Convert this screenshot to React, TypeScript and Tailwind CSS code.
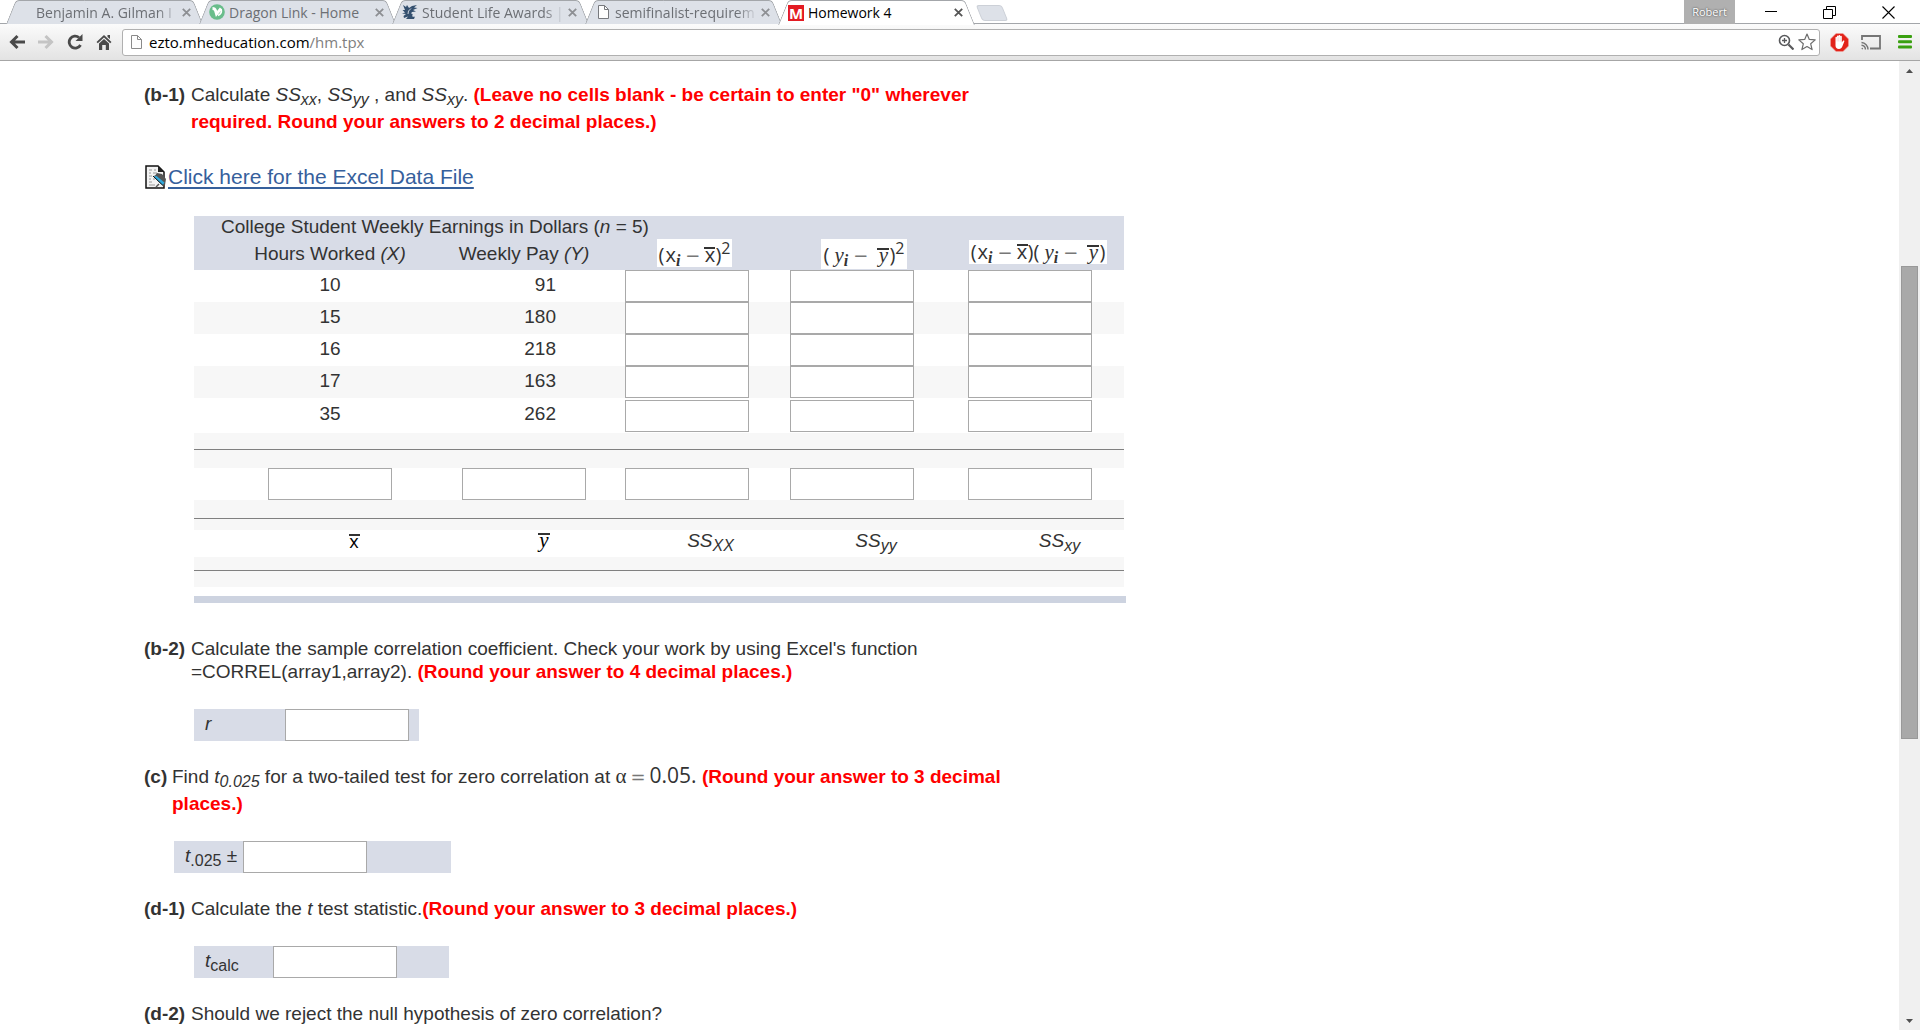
import React from "react";

const box =
  "block h-8 w-[124px] border border-[#a9a9a9] bg-white px-2 text-[19px] outline-none";

function Field({ label, className = "" }: { label: string; className?: string }) {
  return <input type="text" aria-label={label} className={`${box} ${className}`} />;
}

function PageIcon({ stroke = "#8a8a8a" }: { stroke?: string }) {
  return (
    <svg width="16" height="16" viewBox="0 0 16 16" fill="#fdfdfd" stroke={stroke} className="shrink-0">
      <path d="M3.5 1.5h6l4 4v9h-10z" />
      <path d="M9.5 1.5v4h4" fill="none" />
    </svg>
  );
}

function CheckIcon() {
  return (
    <svg width="16" height="16" viewBox="0 0 16 16" className="shrink-0">
      <circle cx="8" cy="8" r="7.8" fill="#69bd8b" />
      <path d="M3.500 4.500c2 0 2.500.5 3 2l1 3.500 4.500-5.500" fill="none" stroke="#fff" strokeWidth="2.800" />
      <path d="M12 5c1 2.500 0 5-3 6.500" fill="none" stroke="#fff" strokeWidth="1.600" />
    </svg>
  );
}

function DragonIcon() {
  return (
    <svg width="16" height="16" viewBox="0 0 16 16" className="shrink-0" fill="#34506f">
      <path d="M1 1l3 2 1-2 2 3 3-2 5-1-3 2.500 3.500.5L11 6l3 1.500-4 .5-1 1.500c2 0 2 1.500 1 2.500 1 1 2.500 1 3 .5L12 15H4l2-2.500L2 14l-.5-2L4 10 0 9.500l3-1L.500 6 3 6z" />
      <path d="M9 4.500L6.500 7l-.5 3" stroke="#dde1e8" strokeWidth=".9" fill="none" />
    </svg>
  );
}

function MLogo() {
  return (
    <span className="flex size-4 shrink-0 items-center justify-center bg-[#e31b23] font-['Open_Sans',sans-serif] text-[15px] leading-4 font-bold text-white">
      M
    </span>
  );
}

type TabProps = { title: string; icon?: React.ReactNode; active?: boolean; fade?: boolean };

function Tab({ title, icon, active = false, fade = false }: TabProps) {
  const side = active
    ? "before:bg-white after:bg-white z-20 h-[25px]"
    : "before:bg-[#dde1e8] after:bg-[#dde1e8] z-10 h-6";
  return (
    <div
      className={`relative -mr-3 flex w-[205px] shrink-0 items-center pr-[14px] pl-[14px] before:absolute before:inset-y-0 before:right-1/2 before:left-1 before:origin-bottom before:-skew-x-[22deg] before:rounded-tl before:border-t before:border-l before:border-[#a3a6aa] after:absolute after:inset-y-0 after:right-1 after:left-[45%] after:origin-bottom after:skew-x-[22deg] after:rounded-tr after:border-t after:border-r after:border-[#a3a6aa] ${side}`}
    >
      <span className="z-10 mr-1 size-4 shrink-0">{icon}</span>
      <button
        type="button"
        className={`z-10 min-w-0 flex-1 overflow-hidden pt-px text-left text-sm leading-6 whitespace-nowrap ${
          active ? "text-black" : "text-[#6c6f74]"
        } ${fade ? "mask-r-from-85%" : ""}`}
      >
        {title}
      </button>
      <button type="button" aria-label={`Close ${title}`} className="z-10 flex h-5 w-[14px] shrink-0 items-center justify-center">
        <svg width="9" height="9" viewBox="0 0 9 9" stroke={active ? "#555" : "#8d8f93"} strokeWidth="1.8">
          <path d="M.8.8l7.4 7.4M8.200.8L.8 8.200" />
        </svg>
      </button>
    </div>
  );
}

function TabStrip() {
  return (
    <header className="flex h-6 justify-between bg-white shadow-[inset_0_-1px_0_#a3a6aa]">
      <nav aria-label="Tabs" className="flex pl-[2px]">
        <Tab title="Benjamin A. Gilman I" fade />
        <Tab title="Dragon Link - Home" icon={<CheckIcon />} />
        <Tab title="Student Life Awards |" icon={<DragonIcon />} fade />
        <Tab title="semifinalist-requirem" icon={<PageIcon stroke="#77797d" />} fade />
        <Tab title="Homework 4" icon={<MLogo />} active />
        <button
          type="button"
          aria-label="New tab"
          className="mt-[5px] ml-3 h-4 w-[26px] skew-x-[22deg] rounded-[3px] border border-[#ccd0d7] bg-[#dde1e8]"
        />
      </nav>
      <div className="flex h-6 items-center">
        <button type="button" className="mr-[30px] h-6 w-[51px] bg-[#b0b0b0] text-[11px] leading-6 text-white [text-shadow:0_0_2px_#333]">
          Robert
        </button>
        <button type="button" aria-label="Minimize" className="mr-[46px]">
          <svg width="12" height="12" viewBox="0 0 12 12" stroke="#000"><path d="M0 5.500h12" /></svg>
        </button>
        <button type="button" aria-label="Restore" className="mr-[46px]">
          <svg width="13" height="13" viewBox="0 0 13 13" stroke="#000" fill="none"><path d="M.5 3.500h9v9h-9zM3.500 3V.5h9v9H10" /></svg>
        </button>
        <button type="button" aria-label="Close" className="mr-[25px]">
          <svg width="13" height="13" viewBox="0 0 13 13" stroke="#000" strokeWidth="1.1"><path d="M.5.5l12 12M12.500.5l-12 12" /></svg>
        </button>
      </div>
    </header>
  );
}

function Toolbar() {
  return (
    <div className="flex h-[37px] shrink-0 items-center border-b border-[#a6a6a6] bg-linear-to-b from-[#fbfbfb] to-[#e3e3e3] pr-2 pl-[9px]">
      <div className="flex gap-[13px] text-[#4a4a4a]">
        <button type="button" aria-label="Back">
          <svg width="16" height="16" viewBox="0 0 16 16" fill="none" stroke="currentColor" strokeWidth="3"><path d="M16 8H3M8.500 2L2.500 8l6 6" /></svg>
        </button>
        <button type="button" aria-label="Forward">
          <svg width="16" height="16" viewBox="0 0 16 16" fill="none" stroke="#c4c4c4" strokeWidth="3"><path d="M0 8h13M7.500 2l6 6-6 6" /></svg>
        </button>
        <button type="button" aria-label="Reload">
          <svg width="16" height="16" viewBox="0 0 16 16" fill="none" stroke="currentColor" strokeWidth="2.800"><path d="M13.500 11A6 6 0 1 1 12 3.500" /><path d="M15.500 0v7h-7z" fill="currentColor" stroke="none" /></svg>
        </button>
        <button type="button" aria-label="Home">
          <svg width="16" height="16" viewBox="0 0 16 16" fill="currentColor"><path d="M8 1l7.500 7-1.300 1.200L8 3.500 1.800 9.200.5 8zM11.500 1H14v4l-2.500-2zM3 9.500l5-4.500 5 4.500V16H9.800v-5H6.200v5H3z" /></svg>
        </button>
      </div>
      <div className="ml-[10px] flex h-[27px] min-w-0 flex-1 items-center rounded-[3px] border border-[#b0b0b0] bg-white pr-[3px] pl-[5px]">
        <PageIcon />
        <div className="ml-[5px] flex min-w-0 flex-1 text-[15px] leading-6 text-black">
          <span>ezto.mheducation.com</span>
          <span className="text-[#808080]">/hm.tpx</span>
        </div>
        <button type="button" aria-label="Zoom" className="mr-1">
          <svg width="16" height="16" viewBox="0 0 16 16" fill="none" stroke="#58595b" strokeWidth="1.600"><circle cx="6.500" cy="6.500" r="5" /><path d="M10.500 10.500l5 5" strokeWidth="2.200" /><path d="M4 6.500h5M6.500 4v5" strokeWidth="1.300" /></svg>
        </button>
        <button type="button" aria-label="Bookmark">
          <svg width="18" height="18" viewBox="0 0 18 18" fill="#fff" stroke="#6d6d6d" strokeWidth="1.200" strokeLinejoin="round"><path d="M9 1l2.300 5.400 5.900.5-4.500 3.900 1.400 5.800L9 13.500l-5.100 3.100 1.400-5.800L.8 6.900l5.900-.5z" /></svg>
        </button>
      </div>
      <div className="ml-[10px] flex items-center">
        <button type="button" aria-label="Ad blocker" className="mr-3">
          <svg width="19" height="19" viewBox="0 0 19 19">
            <path d="M6 .5h7L18.500 6v7L13 18.500H6L.5 13V6z" fill="#e2231a" stroke="#f1a39e" strokeWidth=".6" />
            <path d="M5.500 9V4.500c0-1 1.500-1 1.500 0V3.300c0-1 1.600-1 1.600 0v-.6c0-1 1.600-1 1.600 0v.8c0-1 1.600-1 1.600 0V9.500l1-1.500c.7-.9 1.900-.4 1.500.6l-2 5c-.6 1.600-1.600 2.400-3.300 2.400-2.300 0-3.500-1.500-3.500-3.500z" fill="#fff" />
            <path d="M7.100 4.500v4M8.700 3.500v5M10.300 3.700v5" stroke="#e8b0ad" strokeWidth=".4" />
          </svg>
        </button>
        <button type="button" aria-label="Cast" className="mr-[17px]">
          <svg width="20" height="15" viewBox="0 0 20 15" fill="none" stroke="#757575" strokeWidth="1.800"><path d="M1 5V1h18v12.500H9" /><path d="M.5 7.500a7 7 0 0 1 6.500 7M.5 10.300a4.200 4.200 0 0 1 3.900 4.200" strokeWidth="1.400" /><circle cx="1.300" cy="13.600" r=".8" fill="#757575" stroke="none" /></svg>
        </button>
        <button type="button" aria-label="Menu">
          <svg width="14" height="14" viewBox="0 0 14 14" fill="#3aa010"><rect width="14" height="3" rx="1" /><rect y="5.300" width="14" height="3" rx="1" /><rect y="10.600" width="14" height="3" rx="1" /></svg>
        </button>
      </div>
    </div>
  );
}

function Sub({ children }: { children: React.ReactNode }) {
  return <sub className="text-base leading-none">{children}</sub>;
}

function Red({ children }: { children: React.ReactNode }) {
  return <strong className="font-bold text-[#ff0000]">{children}</strong>;
}

type PartProps = { tag: string; narrow?: boolean; children: React.ReactNode; className?: string };

function Part({ tag, narrow = false, children, className = "" }: PartProps) {
  return (
    <div className={`flex max-w-[890px] ${className}`}>
      <strong className={`shrink-0 font-bold whitespace-nowrap ${narrow ? "w-7" : "w-[47px]"}`}>{tag}</strong>
      <p>{children}</p>
    </div>
  );
}

const serif = "font-['Liberation_Serif',serif]";
const bar = "inline-block h-[15px] border-t-2 border-[#333] text-center leading-[11px]";
const XBar = () => <span className={`w-[11px] ${bar}`}>x</span>;
const YBar = () => <i className={`w-[12px] text-[21px] ${serif} ${bar}`}>y</i>;
const Index = () => <sub className={`text-base font-bold italic ${serif}`}>i</sub>;
const Xi = () => (
  <span className="mx-px">x<Index /></span>
);
const Yi = () => (
  <span className="mr-px ml-[5px]"><i className={`text-[21px] ${serif}`}>y</i><Index /></span>
);
const Operator = ({ children }: { children: string }) => (
  <span className="mx-1 font-['DejaVu_Sans',sans-serif] text-lg leading-none text-[#777]">{children}</span>
);

function Formula({ children, className = "" }: { children: React.ReactNode; className?: string }) {
  return (
    <span className={`inline-block bg-white px-[2px] font-['Open_Sans',sans-serif] text-xl leading-6 whitespace-nowrap ${className}`}>
      {children}
    </span>
  );
}

const rows = [
  [10, 91],
  [15, 180],
  [16, 218],
  [17, 163],
  [35, 262],
];
const columns = ["squared x deviation", "squared y deviation", "product of deviations"];

function Rule({ above, below }: { above: string; below: string }) {
  return (
    <tr className="bg-[#f7f7f7]">
      <td colSpan={7} className={`${above} ${below}`}>
        <hr className="border-[#808080]" />
      </td>
    </tr>
  );
}

function EarningsTable() {
  return (
    <div className="mt-[25px] ml-[50px] w-[932px] border-b-[7px] border-[#cdd3e0] pb-[9px]">
      <table className="w-[930px] table-fixed border-collapse text-center">
        <colgroup>
          <col className="w-[39px]" />
          <col className="w-[194px]" />
          <col className="w-[194px]" />
          <col className="w-[131px]" />
          <col className="w-[200px]" />
          <col className="w-[155px]" />
          <col className="w-[17px]" />
        </colgroup>
        <thead className="bg-[#d8dce7]">
          <tr className="h-[23px] align-top">
            <th colSpan={7} className="pl-[27px] text-left leading-[22px] font-normal">
              College Student Weekly Earnings in Dollars (<i>n</i> = 5)
            </th>
          </tr>
          <tr className="h-[31px] align-top">
            <td />
            <th className="leading-[30px] font-normal whitespace-nowrap">Hours Worked <i>(X)</i></th>
            <th className="leading-[30px] font-normal whitespace-nowrap">Weekly Pay <i>(Y)</i></th>
            <th className="pl-4 font-normal">
              <Formula className="h-7 pt-1">(<Xi /><Operator>−</Operator><XBar />)<sup className="text-base">2</sup></Formula>
            </th>
            <th className="pl-6 font-normal">
              <Formula className="h-[30px] pt-1">(<Yi /><Operator>−</Operator> <YBar />)<sup className="text-base">2</sup></Formula>
            </th>
            <th colSpan={2} className="font-normal">
              <Formula className="h-6">(<Xi /><Operator>−</Operator><XBar />)(<Yi /><Operator>−</Operator> <YBar />)</Formula>
            </th>
          </tr>
        </thead>
        <tbody className="leading-6">
          {rows.map(([x, y], i) => (
            <tr key={x} className={i === 4 ? "h-[35px]" : i % 2 ? "h-8 bg-[#f7f7f7]" : "h-8"}>
              <td />
              <td className="pb-[3px]">{x}</td>
              <td className="pr-[65px] pb-[3px] text-right">{y}</td>
              {columns.map((c) => (
                <td key={c}>
                  <Field label={`${c} for row ${i + 1}`} className="mx-auto" />
                </td>
              ))}
              <td />
            </tr>
          ))}
          <Rule above="pt-4" below="pb-[18px]" />
          <tr className="h-8">
            <td />
            {["mean of x", "mean of y", "SSxx", "SSyy", "SSxy"].map((c) => (
              <td key={c}>
                <Field label={c} className="mx-auto" />
              </td>
            ))}
            <td />
          </tr>
          <Rule above="pt-[18px]" below="pb-[11px]" />
          <tr className="h-[27px] align-top leading-[22px]">
            <td />
            <td className="pl-12 font-['Open_Sans',sans-serif] text-lg leading-[22px] text-black"><XBar /></td>
            <td className="pl-10 text-black"><YBar /></td>
            <td className="pl-12"><i>SS<Sub>XX</Sub></i></td>
            <td className="pl-12"><i>SS<Sub>yy</Sub></i></td>
            <td className="pl-[60px]"><i>SS<Sub>xy</Sub></i></td>
            <td />
          </tr>
          <Rule above="pt-[13px]" below="pb-4" />
        </tbody>
      </table>
    </div>
  );
}

function FileIcon() {
  return (
    <svg width="24" height="24" viewBox="0 0 24 24" className="shrink-0">
      <path d="M2 1h12l6 6v16H2z" fill="#f3f3f3" stroke="#111" strokeWidth="1.500" />
      <path d="M14 1v6h6z" fill="#222" />
      <path d="M5 5h3m2 0h2M5 8h2m2 0h4M5 11h3m2 0h2M5 14h2m2 0h2M5 17h3M5 20h6" stroke="#999" strokeWidth="1.200" />
      <path d="M13 8l5 1 4 5-1 6-4-1-7-7z" fill="#555" />
      <path d="M9.500 11.500l3-.5 8 6.500-2 3z" fill="#30a8dc" />
      <path d="M9 11l10 9.500" stroke="#111" strokeWidth="1" />
      <path d="M12 22l3-3" stroke="#555" strokeWidth="1.500" />
    </svg>
  );
}

type AnswerRowProps = { id: string; label: React.ReactNode; className: string; labelClass: string };

function AnswerRow({ id, label, className, labelClass }: AnswerRowProps) {
  return (
    <div className={`flex h-8 bg-[#d8dce7] leading-[30px] ${className}`}>
      <label htmlFor={id} className={`pl-[11px] whitespace-nowrap ${labelClass}`}>{label}</label>
      <input id={id} type="text" className={box} />
    </div>
  );
}

function Homework() {
  return (
    <main className="min-w-0 flex-1 overflow-hidden pt-5 pl-36 font-['Liberation_Sans',Arial,sans-serif] text-[19px] leading-[27px] text-[#333]">
      <Part tag="(b-1)">
        Calculate <i>SS<Sub>xx</Sub></i>, <i>SS<Sub>yy</Sub></i> , and <i>SS<Sub>xy</Sub></i>.{" "}
        <Red>(Leave no cells blank - be certain to enter "0" wherever required. Round your answers to 2 decimal places.)</Red>
      </Part>
      <div className="mt-7 flex items-center">
        <FileIcon />
        <a href="#data" className="text-[21px] leading-7 text-[#36609c] underline underline-offset-[3px]">Click here for the Excel Data File</a>
      </div>
      <EarningsTable />
      <Part tag="(b-2)" className="mt-[34px] leading-[23px]">
        Calculate the sample correlation coefficient. Check your work by using Excel's function =CORREL(array1,array2).{" "}
        <Red>(Round your answer to 4 decimal places.)</Red>
      </Part>
      <AnswerRow id="r" label={<i>r</i>} className="mt-[26px] ml-[50px] w-[225px]" labelClass="w-[91px]" />
      <Part tag="(c)" narrow className="mt-[22px]">
        Find <i>t<Sub>0.025</Sub></i> for a two-tailed test for zero correlation at{" "}
        <span className="font-['Open_Sans',sans-serif] text-[21px] leading-none"><span className={serif}>α</span><Operator>=</Operator>0.05.</span>{" "}
        <Red>(Round your answer to 3 decimal places.)</Red>
      </Part>
      <AnswerRow id="t025" label={<><i>t</i><Sub>.025</Sub> ±</>} className="mt-[24px] ml-[30px] w-[277px]" labelClass="w-[69px]" />
      <Part tag="(d-1)" className="mt-[22px]">
        Calculate the <i>t</i> test statistic.<Red>(Round your answer to 3 decimal places.)</Red>
      </Part>
      <AnswerRow id="tcalc" label={<><i>t</i><Sub>calc</Sub></>} className="mt-[24px] ml-[50px] w-[255px]" labelClass="w-[79px]" />
      <Part tag="(d-2)" className="mt-[22px]">Should we reject the null hypothesis of zero correlation?</Part>
    </main>
  );
}

function Scrollbar() {
  return (
    <div className="flex w-[21px] shrink-0 flex-col items-center justify-between bg-[#f0f0f0] pt-2 pb-[7px]" aria-hidden="true">
      <svg width="7" height="4" viewBox="0 0 7 4" fill="#505050"><path d="M0 4L3.500 0 7 4z" /></svg>
      <div className="flex w-full flex-1 flex-col items-center">
        <div className="grow-[193]" />
        <div className="w-[17px] grow-[472] border border-[#999] bg-[#a9a9a9]" />
        <div className="grow-[281]" />
      </div>
      <svg width="7" height="4" viewBox="0 0 7 4" fill="#505050"><path d="M0 0h7L3.500 4z" /></svg>
    </div>
  );
}

export default function App() {
  return (
    <div className="flex h-screen flex-col overflow-hidden bg-white font-['Open_Sans','Noto_Sans',sans-serif]">
      <TabStrip />
      <Toolbar />
      <div className="flex min-h-0 flex-1">
        <Homework />
        <Scrollbar />
      </div>
    </div>
  );
}
